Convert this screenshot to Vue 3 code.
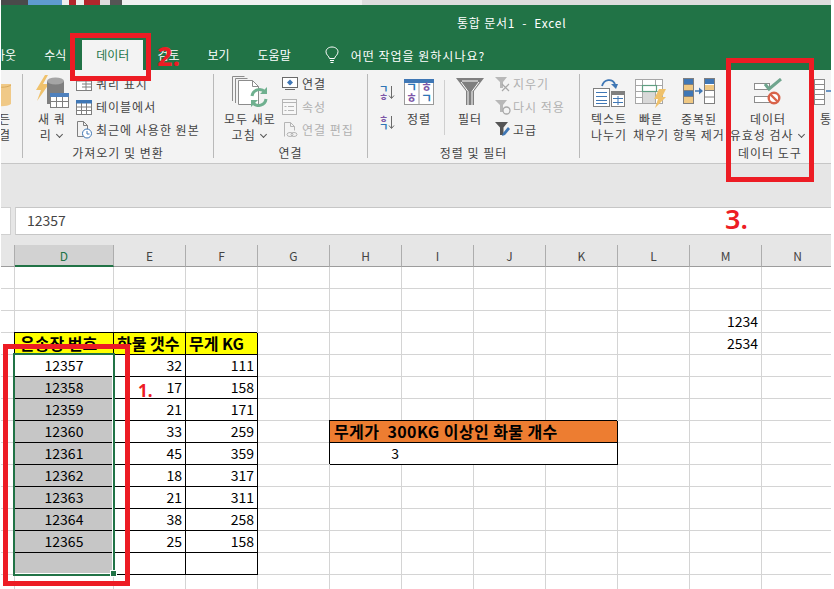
<template>
  <div class="page">
    <div class="screen">
      <!-- bit of the desktop behind the window -->
      <div class="desktop">
        <i class="d-dark"></i><i class="d-blue"></i><i class="d-logo"></i><i class="d-dark2"></i><i class="d-light"></i>
      </div>

      <header class="titlebar">
        <div class="title">통합 문서1&nbsp; - &nbsp;Excel</div>
        <nav class="tabs">
          <span class="tab first">레이아웃</span>
          <span class="tab">수식</span>
          <span class="tab active">데이터</span>
          <span class="tab">검토</span>
          <span class="tab">보기</span>
          <span class="tab">도움말</span>
          <svg class="bulb" width="14" height="18" viewBox="0 0 14 18" fill="none" stroke="#fff" stroke-width="1">
            <path d="M4.5 12.5C4 10 1 9 1 5.8 1 3 3.7 1 7 1s6 2 6 4.8c0 3.2-3 4.2-3.500 6.700z" />
            <path d="M5 14.500h4M5.500 16.500h3" />
          </svg>
          <span class="tell">어떤 작업을 원하시나요?</span>
        </nav>
      </header>

      <div class="ribbon">
        <section class="group g0">
          <div class="tools">
            <div class="big cut">
              <div class="big-icon">
                <svg width="10" height="27" viewBox="0 0 10 27"><path d="M-9 3h19v20c-4 3-15 3-19 0z" fill="#f0c987" /><path d="M-9 4c4 3 15 3 19 0" stroke="#d8ab5e" fill="none" /></svg>
              </div>
              <span>모든</span>
              <span>연결</span>
            </div>
          </div>
        </section>
        <div class="sep"></div>

        <section class="group g1">
          <div class="tools">
            <div class="big w-query">
              <div class="big-icon">
                <svg width="33" height="33" viewBox="0 0 33 33">
                  <polygon points="9,0 0,15 5,15 1,26 13,9 7,9 12,0" fill="#f0c26c" />
                  <path d="M11 6h17v14H15v9h-4z" fill="#7f7f7f" />
                  <ellipse cx="19.500" cy="6" rx="8.500" ry="3.500" fill="#a5a5a5" />
                  <rect x="14.500" y="18.500" width="18" height="14" fill="#fff" stroke="#7f7f7f" />
                  <rect x="14" y="18" width="19" height="4" fill="#4f81bd" />
                  <path d="M14.500 26.500h18M20.500 22v10M26.500 22v10" stroke="#7f7f7f" />
                </svg>
              </div>
              <span>새 쿼</span>
              <span>리 <em class="chev"></em></span>
            </div>
            <div class="stack">
              <div class="small">
                <svg width="16" height="16" viewBox="0 0 16 16" fill="none" stroke="#7f7f7f"><rect x=".5" y="1.500" width="15" height="13" fill="#fff" /><path d="M.5 5h15M6 8h9.500M6 11h9.500M10 5v9" /></svg>
                <span>쿼리 표시</span>
              </div>
              <div class="small">
                <svg width="16" height="16" viewBox="0 0 16 16" fill="none" stroke="#7f7f7f"><rect x=".5" y="1.500" width="15" height="14" fill="#fff" /><rect x="0" y="1" width="16" height="3.500" fill="#3f77b5" stroke="none" /><path d="M.5 8h15M.5 11.500h15M5.500 4v11M10.500 4v11" /></svg>
                <span>테이블에서</span>
              </div>
              <div class="small">
                <svg width="16" height="18" viewBox="0 0 16 18" fill="none"><path d="M1.500.5h6l4 4v5M8 15.500H1.500V.5M7.500.500v4h4" stroke="#7f7f7f" /><circle cx="11" cy="12.500" r="4.500" fill="#fff" stroke="#3f77b5" /><path d="M11 10v3h2.500" stroke="#3f77b5" /></svg>
                <span>최근에 사용한 원본</span>
              </div>
            </div>
          </div>
          <div class="label">가져오기 및 변환</div>
        </section>
        <div class="sep"></div>

        <section class="group g2">
          <div class="tools">
            <div class="big w-refresh">
              <div class="big-icon">
                <svg width="36" height="32" viewBox="0 0 36 32" fill="none">
                  <path d="M.5 26V1.500h12M3.500 28V3.500h12" stroke="#8c8c8c" />
                  <path d="M6.500 29.500v-24h14l6 6v18z" fill="#fff" stroke="#8c8c8c" />
                  <path d="M20.500 5.500v6h6" stroke="#8c8c8c" />
                  <path d="M20 21a7.500 7.500 0 0 1 13-4" stroke="#6fb08f" stroke-width="3" />
                  <path d="M34 24a7.500 7.500 0 0 1-13 4" stroke="#6fb08f" stroke-width="3" />
                  <path d="M35 12v7h-7zM19 32v-7h7z" fill="#6fb08f" />
                </svg>
              </div>
              <span>모두 새로</span>
              <span>고침 <em class="chev"></em></span>
            </div>
            <div class="stack">
              <div class="small">
                <svg width="16" height="16" viewBox="0 0 16 16" fill="none"><rect x=".5" y="1.500" width="15" height="10" stroke="#6a6a6a" fill="#fff" /><path d="M3 13.500h10" stroke="#6a6a6a" /><path d="M8 3.500l3 3-3 3-3-3z" fill="#3f77b5" /></svg>
                <span>연결</span>
              </div>
              <div class="small off">
                <svg width="16" height="16" viewBox="0 0 16 16" fill="none" stroke="#b5b5b5"><rect x=".5" y=".5" width="14" height="15" fill="#f7f7f7" /><path d="M.5 3.500h14M6 7.500h6M6 11.500h6M2.500 7.500h2M2.500 11.500h2" /></svg>
                <span>속성</span>
              </div>
              <div class="small off">
                <svg width="16" height="16" viewBox="0 0 16 16" fill="none" stroke="#b5b5b5"><path d="M2.500 14.500V.5h6l4 4v4M8.500.5v4h4" /><ellipse cx="8" cy="12.500" rx="3" ry="2" /><ellipse cx="12" cy="12.500" rx="3" ry="2" /></svg>
                <span>연결 편집</span>
              </div>
            </div>
          </div>
          <div class="label">연결</div>
        </section>
        <div class="sep"></div>

        <section class="group g3">
          <div class="tools">
            <div class="sort-col">
              <svg width="16" height="17" viewBox="0 0 16 17">
                <text x="0" y="8" class="sort-b">ㄱ</text><text x="0" y="16" class="sort-p">ㅎ</text>
                <path d="M12.500 1v12M10 10.500l2.500 3 2.500-3" fill="none" stroke="#6a6a6a" />
              </svg>
              <svg width="16" height="17" viewBox="0 0 16 17">
                <text x="0" y="8" class="sort-p">ㅎ</text><text x="0" y="16" class="sort-b">ㄱ</text>
                <path d="M12.500 1v12M10 10.500l2.500 3 2.500-3" fill="none" stroke="#6a6a6a" />
              </svg>
            </div>
            <div class="big w-sort">
              <div class="big-icon">
                <svg width="30" height="26" viewBox="0 0 30 26">
                  <rect x=".5" y=".5" width="29" height="25" fill="#fff" stroke="#9a9a9a" />
                  <rect x="0" y="0" width="30" height="4" fill="#3f77b5" />
                  <path d="M15 4v22" stroke="#9a9a9a" />
                  <text x="2" y="13" class="sort-big b">ㄱ</text><text x="2" y="24" class="sort-big p">ㅎ</text>
                  <text x="17" y="13" class="sort-big p">ㅎ</text><text x="17" y="24" class="sort-big b">ㄱ</text>
                </svg>
              </div>
              <span>정렬</span>
            </div>
            <div class="inner-sep"></div>
            <div class="big w-filter">
              <div class="big-icon">
                <svg width="28" height="27" viewBox="0 0 28 27">
                  <path d="M0 0h28L18 13v14h-8V13z" fill="#7f7f7f" />
                  <path d="M6 3h16M5 4l7 9.500V27M23 4l-7 9.500V27" fill="none" stroke="#fff" stroke-width="1" />
                </svg>
              </div>
              <span>필터</span>
            </div>
            <div class="stack">
              <div class="small off tight">
                <svg width="16" height="16" viewBox="0 0 16 16"><path d="M0 1h12L8 6v6H5V6z" fill="#b8b8b8" /><path d="M7 8l7 7M14 8l-7 7" stroke="#a8a8a8" stroke-width="1.200" /></svg>
                <span>지우기</span>
              </div>
              <div class="small off tight">
                <svg width="16" height="16" viewBox="0 0 16 16" fill="none"><path d="M0 1h12L8 6v7H5V6z" fill="#b8b8b8" /><circle cx="11.500" cy="11.500" r="3.500" stroke="#a8a8a8" stroke-width="1.300" /></svg>
                <span>다시 적용</span>
              </div>
              <div class="small tight">
                <svg width="16" height="17" viewBox="0 0 16 17"><path d="M0 1h13L8.500 6.500V14H5V6.500z" fill="#555" /><path d="M7 15l1-3 5-6 2 2-5 6z" fill="#3f77b5" /></svg>
                <span>고급</span>
              </div>
            </div>
          </div>
          <div class="label">정렬 및 필터</div>
        </section>
        <div class="sep"></div>

        <section class="group g4">
          <div class="tools">
            <div class="big w-a">
              <div class="big-icon">
                <svg width="32" height="30" viewBox="0 0 32 30" fill="none">
                  <path d="M9 8C11 1 19 0 22 6" stroke="#3f77b5" stroke-width="1.800" />
                  <path d="M18 6h7l-2 5z" fill="#3f77b5" />
                  <rect x=".5" y="10.500" width="16" height="18" fill="#fff" stroke="#7f7f7f" />
                  <path d="M3 14.500h11M3 18.500h11M3 22.500h11M3 25.500h11" stroke="#3f77b5" />
                  <rect x="18.500" y="13.500" width="13" height="15" fill="#fff" stroke="#7f7f7f" />
                  <rect x="18" y="13" width="14" height="4" fill="#7f7f7f" />
                  <path d="M20 20.500h10M20 24.500h10M25 18v9" stroke="#3f77b5" />
                </svg>
              </div>
              <span>텍스트</span>
              <span>나누기</span>
            </div>
            <div class="big w-a">
              <div class="big-icon">
                <svg width="32" height="30" viewBox="0 0 32 30" fill="none">
                  <rect x=".5" y="1.500" width="27" height="24" fill="#fff" stroke="#a6a6a6" />
                  <path d="M.5 7.500h27M.5 13.500h27M.5 19.500h27M7.500 1.500v24M20.500 1.500v24" stroke="#a6a6a6" />
                  <rect x="8" y="14" width="12" height="11" fill="#d9d9d9" />
                  <rect x="7.500" y="7.500" width="14" height="6" fill="#fff" stroke="#5f9e82" stroke-width="1.200" />
                  <polygon points="24,11 31,11 27,19 31,19 20,30 23,21 19,21" fill="#efc16b" />
                </svg>
              </div>
              <span>빠른</span>
              <span>채우기</span>
            </div>
            <div class="big w-b">
              <div class="big-icon">
                <svg width="32" height="30" viewBox="0 0 32 30" fill="none">
                  <rect x="0" y="0" width="11" height="26" fill="#7f7f7f" />
                  <rect x="1" y="1" width="9" height="5" fill="#3f77b5" />
                  <rect x="1" y="7" width="9" height="5" fill="#efc883" />
                  <rect x="1" y="13" width="9" height="5" fill="#3f77b5" />
                  <rect x="1" y="19" width="9" height="6" fill="#efc883" />
                  <path d="M12 13h6" stroke="#3f77b5" stroke-width="1.500" />
                  <path d="M16 9.500l4 3.500-4 3.500z" fill="#3f77b5" />
                  <rect x="21.500" y=".5" width="10" height="25" fill="#fff" stroke="#7f7f7f" />
                  <rect x="22" y="1" width="9" height="5" fill="#3f77b5" />
                  <rect x="22" y="7" width="9" height="5" fill="#efc883" />
                  <path d="M21.500 12.500h10M21.500 19h10" stroke="#7f7f7f" />
                </svg>
              </div>
              <span>중복된</span>
              <span>항목 제거</span>
            </div>
            <div class="big w-valid">
              <div class="big-icon">
                <svg width="29" height="27" viewBox="0 0 29 27" fill="none">
                  <rect x=".5" y="5.500" width="15" height="6" fill="#fff" stroke="#8c8c8c" />
                  <rect x=".5" y="18.500" width="15" height="6" fill="#fff" stroke="#8c8c8c" />
                  <path d="M11 6l4 5L27 1" stroke="#6fa58e" stroke-width="3" />
                  <circle cx="20" cy="20" r="5.300" fill="#fff" stroke="#d9634a" stroke-width="2.400" />
                  <path d="M16.500 16.500l7 7" stroke="#d9634a" stroke-width="2.400" />
                </svg>
              </div>
              <span>데이터</span>
              <span>유효성 검사 <em class="chev"></em></span>
            </div>
            <div class="big w-next">
              <div class="big-icon">
                <svg width="17" height="30" viewBox="0 0 17 30" fill="none">
                  <rect x=".5" y="1.500" width="10" height="25" fill="#fff" stroke="#8c8c8c" />
                  <path d="M.5 6.500h10M.5 11.500h10M.5 16.500h10M.5 21.500h10" stroke="#8c8c8c" />
                  <path d="M12 13h5" stroke="#3f77b5" stroke-width="1.500" />
                </svg>
              </div>
              <span class="next-text">통합</span>
            </div>
          </div>
          <div class="label">데이터 도구</div>
        </section>
      </div>

      <div class="band"></div>

      <div class="formula">
        <div class="name-box"></div>
        <div class="formula-input">12357</div>
      </div>

      <div class="sheet">
        <div class="row head">
          <div v-for="c in columns" :key="c" class="cell" :class="{ sel: c === 'D' }">{{ c === 'C' ? '' : c }}</div>
        </div>
        <div v-for="(row, i) in rows" :key="i" class="row">
          <div
            v-for="cell in row"
            :key="cell.key"
            class="cell"
            :class="cell.cls"
            :style="cell.span ? { gridColumn: 'span ' + cell.span } : null"
          >{{ cell.text }}</div>
        </div>
      </div>
    </div>

    <!-- selection and the red marks drawn on top of the screenshot -->
    <div class="selection"></div>
    <div class="handle"></div>
    <div class="mark mark1"></div>
    <div class="mark mark2"></div>
    <div class="mark mark3"></div>
    <span class="note n1">1.</span>
    <span class="note n2">2.</span>
    <span class="note n3">3.</span>
  </div>
</template>

<script setup>
const columns = ['C', 'D', 'E', 'F', 'G', 'H', 'I', 'J', 'K', 'L', 'M', 'N']

const table = [
  [12357, 32, 111],
  [12358, 17, 158],
  [12359, 21, 171],
  [12360, 33, 259],
  [12361, 45, 359],
  [12362, 18, 317],
  [12363, 21, 311],
  [12364, 38, 258],
  [12365, 25, 158]
]

const blank = (key) => ({ key, text: '', cls: '' })

const makeRow = (i) => {
  const row = columns.map(blank)

  if (i === 2) row[10] = { key: 'M', text: 1234, cls: 'num' }
  if (i === 3) {
    row[1] = { key: 'D', text: '운송장 번호', cls: 'boxed yellow indent' }
    row[2] = { key: 'E', text: '화물 갯수', cls: 'boxed yellow' }
    row[3] = { key: 'F', text: '무게 KG', cls: 'boxed yellow' }
    row[10] = { key: 'M', text: 2534, cls: 'num' }
  }
  if (i >= 4 && i <= 13) {
    const data = table[i - 4] || ['', '', '']
    row[1] = { key: 'D', text: data[0], cls: i === 4 ? 'boxed center' : 'boxed center picked' }
    row[2] = { key: 'E', text: data[1], cls: 'boxed num' }
    row[3] = { key: 'F', text: data[2], cls: 'boxed num' }
  }
  if (i === 7) {
    row.splice(5, 4, { key: 'H', text: '무게가  300KG 이상인 화물 개수', cls: 'boxed orange', span: 4 })
  }
  if (i === 8) {
    row.splice(5, 4, { key: 'H', text: 3, cls: 'boxed result', span: 4 })
  }
  return row
}

const rows = Array.from({ length: 15 }, (_, i) => makeRow(i))
</script>

<style>
html,
body {
  margin: 0;
  background: #fff;
}
</style>

<style scoped>
.page {
  position: relative;
  width: 834px;
  height: 589px;
  overflow: hidden;
  font-family: "Noto Sans CJK KR", "Noto Sans", sans-serif;
  color: #444;
  font-size: 12px;
}

.screen {
  width: 830px;
  height: 589px;
  margin-left: 1px;
  overflow: hidden;
  background: #e6e6e6;
}

.desktop {
  display: flex;
  height: 5px;
  background: #ddd;
}
.desktop i {
  display: block;
}
.d-dark {
  width: 27px;
  background: #4a4a4a;
}
.d-blue {
  width: 34px;
  background: #5f9bd0;
}
.d-logo {
  width: 48px;
  background: linear-gradient(90deg, #eee 0 15%, #b3262c 15% 30%, #eee 30% 45%, #b3262c 45% 80%, #ddd 80%);
}
.d-dark2 {
  width: 12px;
  background: #555;
}
.d-light {
  width: 240px;
  background: #f0f0f0;
}

.titlebar {
  height: 65px;
  background: #217346;
  color: #fff;
}
.title {
  height: 35px;
  padding-left: 456px;
  line-height: 36px;
  letter-spacing: 0.8px;
  white-space: pre;
}
.tabs {
  display: flex;
  align-items: center;
  height: 30px;
}
.tab {
  padding: 0 14px;
  line-height: 30px;
  white-space: nowrap;
}
.tab.first {
  margin-left: -43px;
}
.tab.active {
  margin-left: 2px;
  background: #f3f3f3;
  color: #217346;
}
.bulb {
  margin-left: 20px;
}
.tell {
  margin-left: 12px;
  letter-spacing: 1px;
  white-space: nowrap;
}

.ribbon {
  display: flex;
  height: 93px;
  background: #f3f3f3;
  border-bottom: 1px solid #c6c6c6;
  letter-spacing: 1px;
  overflow: hidden;
}
.sep {
  flex: none;
  width: 1px;
  margin: 4px 0 5px;
  background: #b9b9b9;
}
.group {
  flex: none;
  display: flex;
  flex-direction: column;
}
.g0 {
  width: 21px;
}
.g1 {
  width: 190px;
}
.g2 {
  width: 153px;
}
.g3 {
  width: 211px;
}
.g4 {
  width: 251px;
}
.tools {
  flex: none;
  display: flex;
  height: 75px;
  padding-top: 3px;
  box-sizing: border-box;
}
.label {
  height: 16px;
  line-height: 16px;
  text-align: center;
  white-space: nowrap;
}
.g4 .label {
  padding-left: 158px;
  text-align: left;
}

.big {
  flex: none;
  display: flex;
  flex-direction: column;
  align-items: center;
  line-height: 16px;
  white-space: nowrap;
}
.big-icon {
  display: flex;
  align-items: flex-start;
  justify-content: center;
  height: 38px;
  padding-top: 2px;
  box-sizing: border-box;
}
.big.cut {
  width: 10px;
  align-items: flex-end;
}
.big.cut .big-icon {
  padding-top: 8px;
}
.g1 .tools {
  padding-left: 5px;
}
.g2 .tools {
  padding-left: 8px;
}
.g3 .tools {
  padding-left: 11px;
}
.g4 .tools {
  padding-left: 8px;
}
.w-query {
  width: 48px;
}
.w-refresh {
  width: 56px;
}
.g2 .stack {
  margin-left: 4px;
}
.w-sort {
  width: 40px;
  margin-left: 4px;
}
.w-sort .big-icon {
  padding-top: 6px;
}
.inner-sep {
  width: 1px;
  height: 55px;
  margin: 7px 7px 0 5px;
  background: #cfcfcf;
}
.w-filter {
  width: 36px;
}
.w-filter .big-icon {
  padding-top: 5px;
}
.g3 .stack {
  margin-left: 7px;
}
.w-a {
  width: 42px;
}
.w-a .big-icon,
.w-b .big-icon,
.w-valid .big-icon,
.w-next .big-icon {
  padding-top: 5px;
}
.w-b {
  width: 54px;
}
.w-valid {
  width: 74px;
  margin-left: 5px;
}
.w-next {
  width: 17px;
  margin-left: 9px;
  align-items: flex-start;
}
.next-text {
  margin-left: 6px;
}

.stack {
  display: flex;
  flex-direction: column;
  margin-top: -1px;
}
.small {
  display: flex;
  align-items: center;
  gap: 4px;
  height: 23px;
  white-space: nowrap;
}
.small.tight {
  gap: 2px;
}
.small.off {
  color: #b1b1b1;
}
.chev {
  display: inline-block;
  width: 4px;
  height: 4px;
  margin: 0 2px 3px 2px;
  border-right: 1px solid #555;
  border-bottom: 1px solid #555;
  transform: rotate(45deg);
}

.sort-col {
  display: flex;
  flex-direction: column;
  gap: 13px;
  width: 16px;
  padding-top: 12px;
}
.sort-b,
.sort-p {
  font-size: 10px;
  font-weight: 700;
}
.sort-b,
.sort-big.b {
  fill: #2e75b6;
}
.sort-p,
.sort-big.p {
  fill: #7e57a8;
}
.sort-big {
  font-size: 12px;
  font-weight: 700;
}

.band {
  height: 43px;
  background: #e6e6e6;
}

.formula {
  display: flex;
  gap: 4px;
  height: 28px;
  background: #e6e6e6;
}
.name-box {
  width: 10px;
  background: #fff;
  border: 1px solid #d0d0d0;
  border-left: 0;
  box-sizing: border-box;
}
.formula-input {
  flex: 1;
  padding-left: 11px;
  background: #fff;
  border-top: 1px solid #c6c6c6;
  border-bottom: 1px solid #c6c6c6;
  border-left: 1px solid #d0d0d0;
  line-height: 25px;
  font-size: 14px;
}

.sheet {
  margin-top: 10px;
  background: #fff;
}
.row {
  display: grid;
  grid-template-columns: 14px 99px repeat(9, 72px) 72px;
  height: 22px;
}
.cell {
  box-sizing: border-box;
  height: 22px;
  padding: 0 3px;
  border-right: 1px solid #d4d4d4;
  border-bottom: 1px solid #d4d4d4;
  background: #fff;
  color: #000;
  font-size: 14px;
  line-height: 21px;
  white-space: pre;
  overflow: hidden;
}
.head .cell {
  background: #e6e6e6;
  border-right-color: #adadad;
  border-bottom-color: #9c9c9c;
  color: #444;
  font-size: 12px;
  text-align: center;
}
.head .cell.sel {
  background: #d2d2d2;
  border-bottom: 2px solid #217346;
  color: #217346;
}
.num {
  text-align: right;
}
.center {
  text-align: center;
}
.indent {
  padding-left: 5px;
}
.boxed {
  position: relative;
  border-color: #000;
  box-shadow: -1px -1px 0 #000;
}
.yellow {
  background: #ff0;
  font-weight: 700;
  font-size: 16px;
}
.orange {
  padding-left: 4px;
  background: #ed7d31;
  font-weight: 700;
  font-size: 16px;
  letter-spacing: 0.4px;
}
.picked {
  background: #c6c6c6;
}
.result {
  padding-right: 218px;
  text-align: right;
}

.selection {
  position: absolute;
  left: 13px;
  top: 353px;
  width: 102px;
  height: 223px;
  box-sizing: border-box;
  border: 2px solid #217346;
  box-shadow: inset -1px -1px 0 #fff;
}
.handle {
  position: absolute;
  left: 111px;
  top: 571px;
  width: 5px;
  height: 5px;
  background: #217346;
  outline: 1px solid #fff;
}

.mark {
  position: absolute;
  box-sizing: border-box;
  border: 5px solid #ed1c24;
}
.mark1 {
  left: 3px;
  top: 344px;
  width: 127px;
  height: 242px;
}
.mark2 {
  left: 70px;
  top: 33px;
  width: 81px;
  height: 48px;
}
.mark3 {
  left: 726px;
  top: 58px;
  width: 88px;
  height: 124px;
}
.note {
  position: absolute;
  color: #ed1c24;
  font-family: "Noto Sans", sans-serif;
  font-weight: 700;
  line-height: 1;
}
.n1 {
  left: 138px;
  top: 382px;
  font-size: 17px;
}
.n2 {
  left: 157px;
  top: 42px;
  font-size: 27px;
}
.n3 {
  left: 725px;
  top: 205px;
  font-size: 27px;
  font-weight: 600;
}
</style>
